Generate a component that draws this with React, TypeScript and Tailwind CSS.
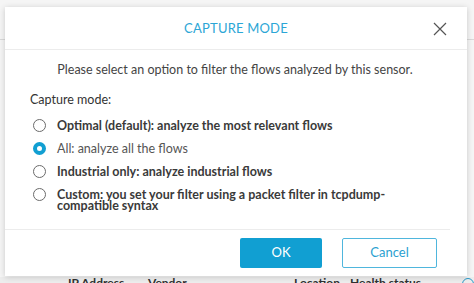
import React, { useState } from 'react';

const options = [
  { id: 'optimal', label: 'Optimal (default): analyze the most relevant flows', bold: true },
  { id: 'all', label: 'All: analyze all the flows', bold: false },
  { id: 'industrial', label: 'Industrial only: analyze industrial flows', bold: true },
  {
    id: 'custom',
    label: 'Custom: you set your filter using a packet filter in tcpdump-compatible syntax',
    bold: true,
  },
];

const Radio = ({ checked }: { checked: boolean }) =>
  checked ? (
    <span className="h-[13px] w-[13px] shrink-0 rounded-full border-[4px] border-[#119fd2] bg-white" />
  ) : (
    <span className="h-[13px] w-[13px] shrink-0 rounded-full border border-[#6b6b6b] bg-white" />
  );

export default function App() {
  const [mode, setMode] = useState('all');

  return (
    <div
      className="relative h-[283px] w-[474px] overflow-hidden bg-[#f7f7f7] text-[#333]"
      style={{ fontFamily: 'Lato, "Open Sans", sans-serif' }}
    >
      {/* page behind the dialog */}
      <div className="flex h-full flex-col">
        <div className="h-[40px] border-b border-[#e2e2e2] bg-white" />
        <div className="flex-1 bg-white" />
        <div className="flex h-[6px] items-start pl-[68px] text-[12px] font-bold leading-[12px] text-[#333]">
          <span className="w-[80px]">IP Address</span>
          <span className="w-[146px]">Vendor</span>
          <span className="w-[56px]">Location</span>
          <span className="w-[112px]">Health status</span>
          <span className="mt-[1px] h-[12px] w-[12px] rounded-full border border-[#2a9fd0]" />
        </div>
      </div>
      <div className="absolute inset-0 bg-black/[0.04]" />

      {/* dialog */}
      <div className="absolute left-[5px] top-[7px] flex h-[269px] w-[462px] flex-col bg-white shadow-[0_1px_6px_rgba(0,0,0,0.18)]">
        <div className="relative flex h-[43px] shrink-0 items-center justify-center border-b border-[#ececec]">
          <span className="pt-[1px] text-[13px] tracking-[0.2px] text-[#2ba6d6]">CAPTURE MODE</span>
          <button className="absolute right-[20px] top-[15px] text-[#555]">
            <svg width="14" height="14" viewBox="0 0 14 14" fill="none" stroke="currentColor" strokeWidth="1.2">
              <path d="M1 1l12 12M13 1L1 13" />
            </svg>
          </button>
        </div>

        <div className="mr-[17px] flex flex-1 flex-col border-b border-[#ececec] pl-[25px] pr-[10px]">
          <p className="mt-[12px] text-center text-[12.5px] leading-[16px] text-[#444]">
            Please select an option to filter the flows analyzed by this sensor.
          </p>
          <p className="mt-[14px] text-[12.5px] leading-[16px] text-[#333]">Capture mode:</p>
          <div className="mt-[11px] flex flex-col gap-[10px] pl-[3px]">
            {options.map((o) => (
              <label
                key={o.id}
                onClick={() => setMode(o.id)}
                className="flex cursor-pointer items-start gap-[11px]"
              >
                <Radio checked={mode === o.id} />
                <span
                  className={`pt-[1px] text-[12.5px] leading-[11px] ${
                    o.bold ? 'font-bold text-[#3a3a3a]' : 'text-[#555]'
                  } ${o.id === 'custom' ? 'w-[336px]' : ''}`}
                >
                  {o.label}
                </span>
              </label>
            ))}
          </div>
        </div>

        <div className="flex h-[46px] shrink-0 items-start justify-end gap-[20px] pr-[30px] pt-[8px]">
          <button className="h-[30px] w-[82px] rounded-[2px] bg-[#119fd2] text-[13px] text-white">OK</button>
          <button className="h-[30px] w-[95px] rounded-[2px] border border-[#4fb6dd] bg-white text-[13px] text-[#2a9fd0]">
            Cancel
          </button>
        </div>
      </div>
    </div>
  );
}
